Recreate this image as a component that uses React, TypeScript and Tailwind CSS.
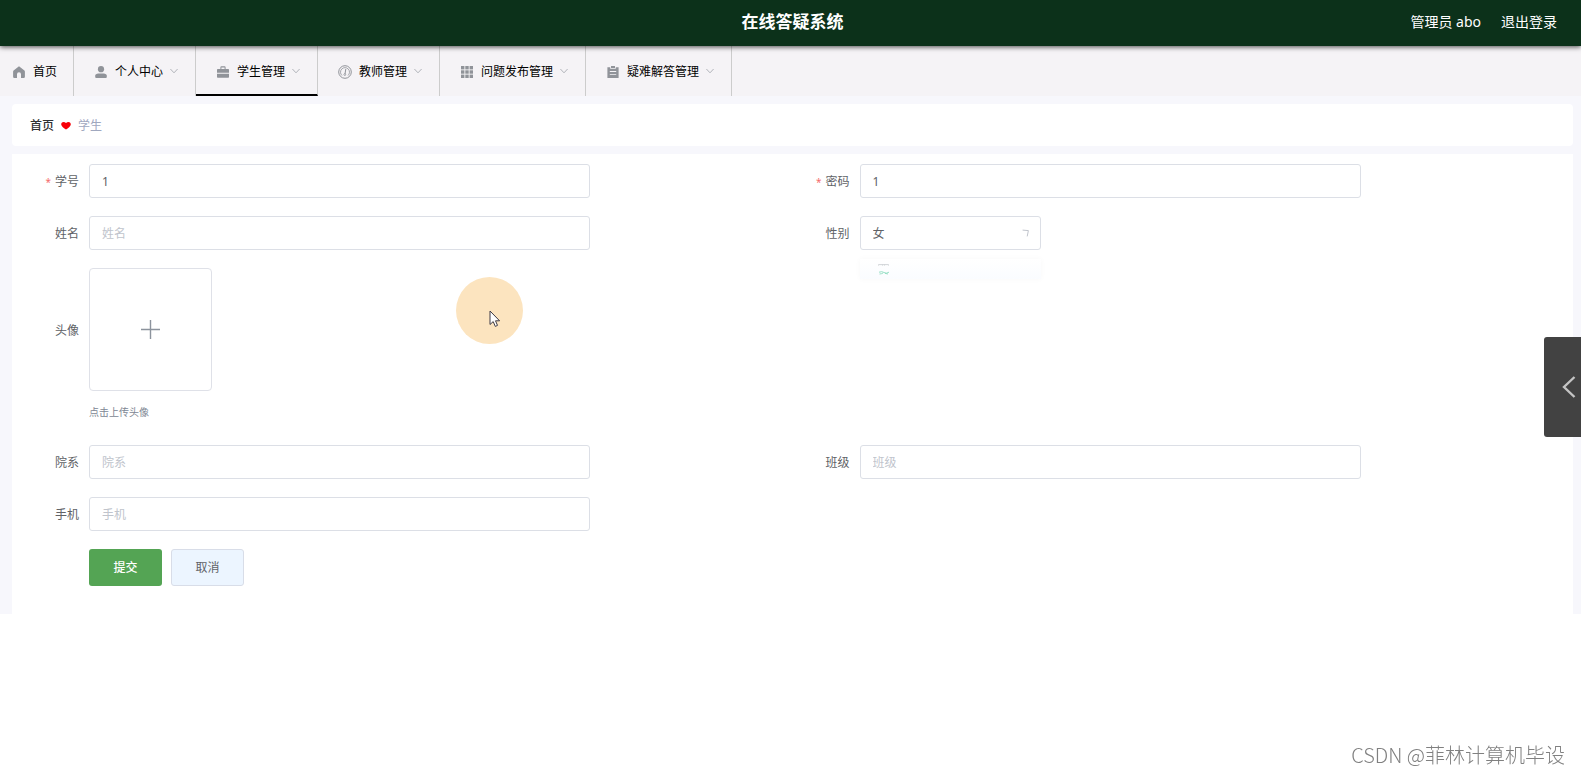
import { useState } from 'react';
import type { ReactNode } from 'react';

function HomeIcon() {
  return (
    <svg viewBox="0 0 12 12" className="w-3 h-3 shrink-0 text-[#909399]" fill="currentColor">
      <path d="M6 0.2 11.4 4.6a1.4 1.4 0 0 1 .5 1.1V10.8a1.2 1.2 0 0 1-1.2 1.2H8V8.2a2 2 0 0 0-4 0V12H1.3A1.2 1.2 0 0 1 .1 10.8V5.7a1.4 1.4 0 0 1 .5-1.1Z" />
    </svg>
  );
}

function UserIcon() {
  return (
    <svg viewBox="0 0 12 12" className="w-3 h-3 shrink-0 text-[#909399]" fill="currentColor">
      <circle cx="6" cy="3.2" r="3.1" />
      <path d="M.2 11V9.4C.2 8.2 1.6 7.6 3.2 7.4h5.6c1.6.2 3 .8 3 2V11a1 1 0 0 1-1 1H1.2a1 1 0 0 1-1-1Z" />
    </svg>
  );
}

function CaseIcon() {
  return (
    <svg viewBox="0 0 12 12" className="w-3 h-3 shrink-0 text-[#909399]" fill="currentColor">
      <path d="M3.4 3V1.2c0-.6.4-.9.9-.9h3.4c.5 0 .9.3.9.9V3h2.7c.4 0 .7.3.7.7v3H0v-3C0 3.3.3 3 .7 3ZM4.4 3h3.2V1.4H4.4Z" fillRule="evenodd" />
      <path d="M0 7.7h12v3.3a.7.7 0 0 1-.7.7H.7A.7.7 0 0 1 0 11Z" />
    </svg>
  );
}

function GaugeIcon() {
  return (
    <svg viewBox="0 0 14 14" className="w-3.5 h-3.5 -mx-px shrink-0 text-[#909399]" fill="none" stroke="currentColor">
      <circle cx="7" cy="7" r="6.3" />
      <path d="M4 10.5a4.5 4.5 0 1 1 6 0" strokeWidth="0.8" />
      <path d="M7.8 4 7 9" strokeWidth="1" />
      <circle cx="6.8" cy="9.6" r="0.9" strokeWidth="0.8" />
    </svg>
  );
}

function GridIcon() {
  return (
    <svg viewBox="0 0 12 12" className="w-3 h-3 shrink-0 text-[#909399]" fill="currentColor">
      {[0, 4.3, 8.6].map(y => [0, 4.3, 8.6].map(x => (
        <rect key={`${x}-${y}`} x={x} y={y} width="3.4" height="3.4" />
      )))}
    </svg>
  );
}

function OrderIcon() {
  return (
    <svg viewBox="0 0 12 12" className="w-3 h-3 shrink-0 text-[#909399]" fill="currentColor">
      <path fillRule="evenodd" d="M.4 1.2h2.8v1.6h5.6V1.2h2.8V12H.4ZM2.8 5v.9h6.4V5ZM2.8 8.2v.9h6.4v-.9Z" />
      <path d="M4 0h4v2H4z" />
    </svg>
  );
}

function Chevron() {
  return (
    <svg viewBox="0 0 8 8" className="w-2 h-2 mb-0.5 shrink-0 text-[#a8abb2]" fill="none" stroke="currentColor" strokeWidth="0.9">
      <path d="M.4 2 4 5.8 7.6 2" />
    </svg>
  );
}

const MENU = [
  { label: '个人中心', icon: <UserIcon /> },
  { label: '学生管理', icon: <CaseIcon />, active: true },
  { label: '教师管理', icon: <GaugeIcon /> },
  { label: '问题发布管理', icon: <GridIcon /> },
  { label: '疑难解答管理', icon: <OrderIcon /> },
];

const INPUT = 'w-full max-w-[501px] h-[34px] px-3 rounded-[3px] border border-[#dcdfe6] bg-white text-xs text-[#606266] placeholder:text-[#c0c4cc] focus:outline-none focus:border-[#54a454]';

function Field({ id, label, required, children }: { id: string; label: string; required?: boolean; children: ReactNode }) {
  return (
    <div className="flex items-center">
      <label htmlFor={id} className="w-[67px] pt-0.5 pr-2.5 shrink-0 text-right text-xs text-[#606266]">
        {required && <span className="text-[10px] text-[#f56c6c] mr-1">*</span>}
        {label}
      </label>
      {children}
    </div>
  );
}

export default function App() {
  const [form, setForm] = useState({ no: '1', password: '1', name: '', sex: '女', dept: '', klass: '', phone: '' });
  const set = (key: keyof typeof form) => (e: { target: { value: string } }) =>
    setForm({ ...form, [key]: e.target.value });

  return (
    <div className="relative min-h-screen overflow-x-hidden bg-white font-['Noto_Sans','Noto_Sans_CJK_SC',sans-serif] text-xs">
      {/* Top bar */}
      <header className="relative z-10 grid grid-cols-[1fr_auto_1fr] items-center h-[46px] pl-7 pr-6 pb-0.5 bg-[#0c311a] text-white shadow-[0_1px_5px_rgba(0,0,0,0.7)]">
        <h1 className="col-start-2 text-[17px] leading-6 font-bold">在线答疑系统</h1>
        <div className="flex justify-end gap-5 text-sm">
          <span>管理员 abo</span>
          <a href="#logout">退出登录</a>
        </div>
      </header>

      {/* Menu */}
      <nav className="flex h-[50px] bg-[#f5f3f6] text-black">
        <a href="#home" className="flex items-center gap-2 pl-[13px] pr-4 pt-0.5 border-r border-[#cccccc]">
          <HomeIcon />
          首页
        </a>
        {MENU.map(item => (
          <a
            key={item.label}
            href="#menu"
            className={item.active
              ? 'flex items-center pl-[21px] pr-[17px] pt-1 border-r border-r-[#cccccc] border-b-2 border-b-black'
              : 'flex items-center pl-[21px] pr-[17px] pt-0.5 border-r border-[#cccccc]'}
          >
            {item.icon}
            <span className="ml-2 mr-[7px]">{item.label}</span>
            <Chevron />
          </a>
        ))}
      </nav>

      <main className="bg-[#f7f7fc] pl-3 pr-2 pt-2">
        {/* Breadcrumb */}
        <div className="flex items-center h-[42px] px-[18px] pt-0.5 mb-2 bg-white rounded">
          <a href="#home" className="font-medium text-[#303133]">首页</a>
          <svg viewBox="0 0 10 8" className="w-2.5 h-2 mx-[7px] text-[#f80008]" fill="currentColor">
            <path d="M5 1C5.7.4 6.6.1 7.5.1 9 .1 9.8 1.2 9.8 2.5 9.8 4.3 7 6.2 5 7.6 3 6.2.2 4.3.2 2.5.2 1.2 1 .1 2.500.1 3.400.1 4.300.4 5 1Z" />
          </svg>
          <span className="text-[#a0a8bf]">学生</span>
        </div>

        <form className="relative bg-white px-2.5 pt-2.5 pb-7" onSubmit={e => e.preventDefault()}>
          <div className="grid grid-cols-2 gap-y-[18px]">
            <Field id="no" label="学号" required>
              <input id="no" className={INPUT} value={form.no} onChange={set('no')} />
            </Field>
            <Field id="password" label="密码" required>
              <input id="password" className={INPUT} value={form.password} onChange={set('password')} />
            </Field>
            <Field id="name" label="姓名">
              <input id="name" className={INPUT} placeholder="姓名" value={form.name} onChange={set('name')} />
            </Field>
            <Field id="sex" label="性别">
              <div className="relative w-[181px]">
                <select
                  id="sex"
                  value={form.sex}
                  onChange={set('sex')}
                  className="w-full h-[34px] px-3 pt-0.5 appearance-none rounded-[3px] border border-[#dcdfe6] bg-white text-xs text-[#606266] focus:outline-none"
                >
                  <option>男</option>
                  <option>女</option>
                </select>
                <svg viewBox="0 0 8 8" className="absolute right-[11px] top-[13px] w-2 h-2 pointer-events-none text-[#c0c4cc]" fill="none" stroke="currentColor" strokeWidth="1">
                  <path d="M.6 1.1 6.4 1.6 5.2 7.4" />
                </svg>
                {/* Option list folding away */}
                <div className="absolute left-0 top-[43px] w-full h-5 bg-linear-to-b from-white to-[#fafcff] shadow-[0_0_6px_rgba(0,0,0,0.03)]">
                  <svg viewBox="0 0 12 12" className="ml-[18px] mt-1 w-3 h-3" fill="none" strokeWidth="0.9">
                    <path d="M.5 2.6V1.6H10.5V2.6M4.5 1.6V2.6M6.5 1.6V2.6" stroke="#cdd0d4" />
                    <path d="M1 9.2Q4 8 6 9.5T11 9.2M1.5 11Q4 10.8 5 10M7 10.3 10 11" stroke="#8fdcc0" />
                  </svg>
                </div>
              </div>
            </Field>

            <div className="col-span-2">
              <Field id="avatar" label="头像">
                <label
                  htmlFor="avatar"
                  className="flex items-center justify-center w-[123px] h-[123px] rounded border border-[#dfe1e8] cursor-pointer"
                >
                  <svg viewBox="0 0 19 19" className="w-[19px] h-[19px] text-[#8c939d]" fill="none" stroke="currentColor" strokeWidth="1.4">
                    <path d="M9.5 0v19M0 9.5h19" />
                  </svg>
                  <input id="avatar" type="file" accept="image/*" className="sr-only" />
                </label>
              </Field>
              <p className="pl-[67px] mt-[13px] mb-[7px] text-[10px] leading-4 text-[#808794]">点击上传头像</p>
            </div>

            <Field id="dept" label="院系">
              <input id="dept" className={INPUT} placeholder="院系" value={form.dept} onChange={set('dept')} />
            </Field>
            <Field id="klass" label="班级">
              <input id="klass" className={INPUT} placeholder="班级" value={form.klass} onChange={set('klass')} />
            </Field>
            <Field id="phone" label="手机">
              <input id="phone" className={INPUT} placeholder="手机" value={form.phone} onChange={set('phone')} />
            </Field>
          </div>

          <div className="flex gap-[9px] pl-[67px] mt-[18px]">
            <button type="submit" className="w-[73px] h-[37px] rounded-[3px] bg-[#54a454] text-white font-medium">提交</button>
            <button type="button" className="w-[73px] h-[37px] rounded-[3px] border border-[#d8dde8] bg-[#ecf5ff] text-[#606266]">取消</button>
          </div>

          {/* Pointer highlight */}
          <div className="absolute left-[444px] top-[123px] w-[67px] h-[67px] rounded-full bg-[#fce4bf] pointer-events-none">
            <svg viewBox="0 0 12 18" className="absolute left-[33px] top-[33px] w-3 h-[18px]" fill="white" stroke="#3f3b45" strokeWidth="1">
              <path d="M1 1V14.5L4.2 11.6 6.3 16.4 8.5 15.4 6.5 10.8H10.6Z" />
            </svg>
          </div>
        </form>
      </main>

      {/* Side handle */}
      <button
        type="button"
        aria-label="展开"
        className="fixed right-0 top-[337px] z-20 flex items-center justify-end w-[37px] h-[100px] pr-[5px] rounded-l-[3px] bg-[#424242]"
      >
        <svg viewBox="0 0 14 22" className="w-3.5 h-[22px] text-[#c4c4c4]" fill="none" stroke="currentColor" strokeWidth="2.4">
          <path d="M12.5 1 2 11 12.5 21" />
        </svg>
      </button>

      <p className="fixed right-4 bottom-1.5 text-xl leading-7 font-light text-[#808080] font-['Noto_Sans_CJK_SC',sans-serif]">
        CSDN @菲林计算机毕设
      </p>
    </div>
  );
}
